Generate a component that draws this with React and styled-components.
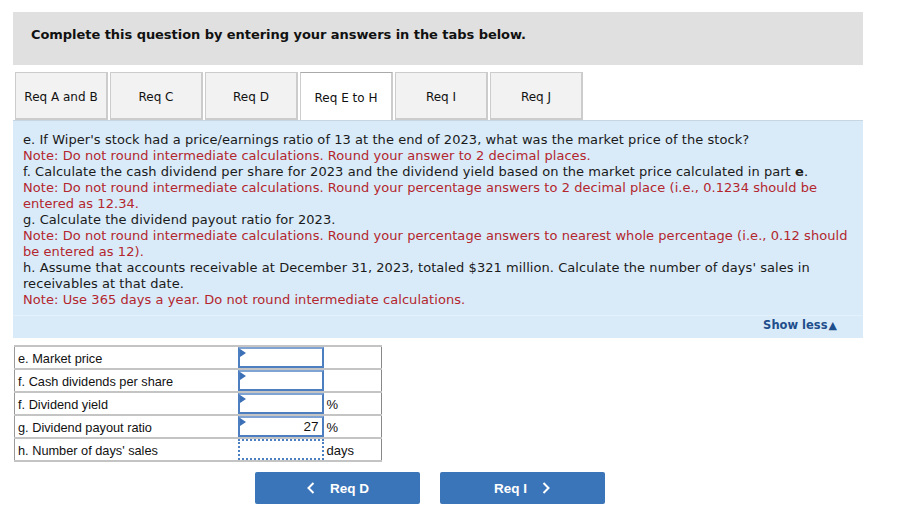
import React from "react";
import styled, { createGlobalStyle } from "styled-components";

const GlobalStyle = createGlobalStyle`
  body {
    margin: 0;
    background: #fff;
    font-family: "DejaVu Sans", Verdana, sans-serif;
  }
`;

const tabs = ["Req A and B", "Req C", "Req D", "Req E to H", "Req I", "Req J"];

const rows = [
  { label: "e. Market price", value: "", unit: "" },
  { label: "f. Cash dividends per share", value: "", unit: "" },
  { label: "f. Dividend yield", value: "", unit: "%" },
  { label: "g. Dividend payout ratio", value: "27", unit: "%" },
  { label: "h. Number of days' sales", value: "", unit: "days", dotted: true },
];

export default function App() {
  return (
    <Page>
      <GlobalStyle />
      <Header>Complete this question by entering your answers in the tabs below.</Header>
      <TabBar>
        {tabs.map((t) => (
          <Tab key={t} $active={t === "Req E to H"}>
            {t}
          </Tab>
        ))}
      </TabBar>
      <Panel>
        <Body>
          <Line>
            e. If Wiper's stock had a price/earnings ratio of 13 at the end of 2023, what was the
            market price of the stock?
          </Line>
          <Note>Note: Do not round intermediate calculations. Round your answer to 2 decimal places.</Note>
          <Line>
            f. Calculate the cash dividend per share for 2023 and the dividend yield based on the
            market price calculated in part <b>e</b>.
          </Line>
          <Note>
            Note: Do not round intermediate calculations. Round your percentage answers to 2 decimal
            place (i.e., 0.1234 should be entered as 12.34.
          </Note>
          <Line>g. Calculate the dividend payout ratio for 2023.</Line>
          <Note>
            Note: Do not round intermediate calculations. Round your percentage answers to nearest
            whole percentage (i.e., 0.12 should be entered as 12).
          </Note>
          <Line>
            h. Assume that accounts receivable at December 31, 2023, totaled $321 million. Calculate
            the number of days' sales in receivables at that date.
          </Line>
          <Note>Note: Use 365 days a year. Do not round intermediate calculations.</Note>
        </Body>
        <ShowLess>
          Show less<span>▲</span>
        </ShowLess>
      </Panel>
      <Table>
        <tbody>
          {rows.map((r) => (
            <tr key={r.label}>
              <LabelCell>{r.label}</LabelCell>
              <InputCell>
                <Field $dotted={r.dotted}>
                  {!r.dotted && <Marker />}
                  {r.value}
                </Field>
              </InputCell>
              <UnitCell>{r.unit}</UnitCell>
            </tr>
          ))}
        </tbody>
      </Table>
      <Nav>
        <NavButton>
          <Chevron viewBox="0 0 10 14">
            <path d="M7.5 2 L2.5 7 L7.5 12" />
          </Chevron>
          Req D
        </NavButton>
        <NavButton>
          Req I
          <Chevron viewBox="0 0 10 14">
            <path d="M2.5 2 L7.5 7 L2.5 12" />
          </Chevron>
        </NavButton>
      </Nav>
    </Page>
  );
}

const Page = styled.div`
  padding: 12px 0 0 13px;
  width: 850px;
`;

const Header = styled.div`
  background: #e0e0e0;
  height: 53px;
  box-sizing: border-box;
  padding: 15px 0 0 18px;
  font-size: 13px;
  font-weight: bold;
  letter-spacing: -0.05px;
  color: #111;
`;

const TabBar = styled.div`
  display: flex;
  gap: 2px;
  margin-top: 7px;
  padding-left: 2px;
`;

const Tab = styled.div`
  width: 93px;
  height: 48px;
  box-sizing: border-box;
  display: flex;
  align-items: center;
  justify-content: center;
  padding-top: 2px;
  font-size: 12px;
  color: #111;
  background: ${(p) => (p.$active ? "#fff" : "#f2f2f2")};
  border: 1px solid #ccc;
  border-top-color: ${(p) => (p.$active ? "#aaa" : "#ccc")};
  border-bottom: ${(p) => (p.$active ? "none" : "2px solid #ccc")};
  border-right-width: 2px;
`;

const Panel = styled.div`
  background: #d9ebf9;
  border-top: 1px solid #c8d6e2;
`;

const Body = styled.div`
  padding: 11px 10px 7px 10px;
  font-size: 13px;
  line-height: 16px;
  letter-spacing: 0.06px;
  color: #1a1a1a;
  border-bottom: 1px solid #e4f1fb;
`;

const Line = styled.div``;

const Note = styled.div`
  color: #b3262d;
`;

const ShowLess = styled.div`
  text-align: right;
  padding: 0 26px 0 0;
  height: 22px;
  line-height: 18px;
  font-size: 11.5px;
  font-weight: bold;
  color: #1f4e8c;
  span {
    font-size: 11px;
    margin-left: 1px;
  }
`;

const Table = styled.table`
  margin: 7px 0 0 1px;
  border-collapse: collapse;
  font-family: "Liberation Sans", Arial, sans-serif;
  font-size: 12.75px;
  color: #111;
  td {
    height: 23px;
    padding: 0;
    padding-top: 1px;
    box-sizing: border-box;
    border-top: 2px solid #c4c4c4;
    border-bottom: 2px solid #c4c4c4;
  }
`;

const LabelCell = styled.td`
  width: 223px;
  padding-left: 3px !important;
  border-left: 1px solid #999;
`;

const InputCell = styled.td`
  width: 86px;
  padding: 0 !important;
`;

const Field = styled.div`
  position: relative;
  height: 21px;
  box-sizing: border-box;
  border: ${(p) => (p.$dotted ? "2px dotted #4a7fc1" : "2px solid #4d7fc0")};
  border-top-color: ${(p) => (p.$dotted ? "#4a7fc1" : "#7fa3d3")};
  text-align: right;
  padding-right: 3px;
  line-height: 18px;
  font-size: 13.5px;
`;

const Marker = styled.span`
  position: absolute;
  left: 0;
  top: 0;
  width: 0;
  height: 0;
  border-top: 4px solid transparent;
  border-bottom: 4px solid transparent;
  border-left: 6px solid #3b6fb6;
`;

const UnitCell = styled.td`
  width: 58px;
  padding-left: 3px !important;
  border-right: 1px solid #888;
  font-size: 13px;
`;

const Nav = styled.div`
  display: flex;
  gap: 20px;
  margin: 10px 0 0 242px;
`;

const NavButton = styled.div`
  width: 165px;
  height: 32px;
  background: #3b75b9;
  border-radius: 2px;
  display: flex;
  align-items: center;
  justify-content: center;
  gap: 14px;
  color: #fff;
  font-family: "Liberation Sans", Arial, sans-serif;
  font-weight: bold;
  font-size: 13.5px;
`;

const Chevron = styled.svg`
  width: 10px;
  height: 14px;
  fill: none;
  stroke: #fff;
  stroke-width: 2;
`;
